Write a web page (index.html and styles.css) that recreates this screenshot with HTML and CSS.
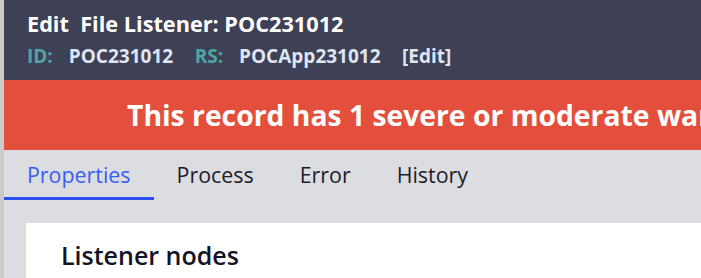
FILE: index.html
```html
<!DOCTYPE html>
<html>
<head>
<meta charset="utf-8">
<link rel="stylesheet" href="styles.css">
</head>
<body>
<div class="page">
  <div class="rail"></div>
  <div class="main">
    <header class="header">
      <h1 class="title">Edit&nbsp; File Listener: POC231012</h1>
      <div class="meta">
        <span class="key">ID:</span><span class="val">POC231012</span>
        <span class="key">RS:</span><span class="val">POCApp231012</span>
        <span class="edit">[Edit]</span>
      </div>
    </header>
    <div class="banner">This record has 1 severe or moderate warnings</div>
    <nav class="tabs">
      <span class="tab active">Properties</span>
      <span class="tab">Process</span>
      <span class="tab">Error</span>
      <span class="tab">History</span>
    </nav>
    <section class="content">
      <div class="card">
        <h2 class="card-title">Listener nodes</h2>
      </div>
    </section>
  </div>
</div>
</body>
</html>
```
FILE: styles.css
```css
* { box-sizing: border-box; margin: 0; padding: 0; }
html, body { width: 701px; height: 278px; overflow: hidden; }
body { font-family: "Open Sans", "Noto Sans", sans-serif; background: #dcdde1; }
.page { display: flex; height: 278px; }
.rail { width: 4px; background: #cacaca; flex: none; }
.main { flex: 1; display: flex; flex-direction: column; min-width: 0; }
.header { background: #3e4055; height: 80px; padding: 11px 0 0 23px; }
.title { color: #ffffff; font-size: 21.7px; font-weight: 700; line-height: 26px; white-space: nowrap; }
.meta { margin-top: 8px; font-size: 19px; font-weight: 700; line-height: 22px; display: flex; white-space: nowrap; }
.key { color: #4ea6a3; margin-right: 16px; }
.val { color: #dfe5f3; margin-right: 21.5px; }
.edit { color: #dfe5f3; }
.banner { background: #e44e3c; height: 70px; color: #ffffff; font-size: 28.3px; font-weight: 700; line-height: 70px; white-space: nowrap; overflow: hidden; padding-left: 123px; }
.tabs { display: flex; height: 51px; padding-top: 11px; }
.tab { font-size: 21.4px; line-height: 28px; color: #1c1c2b; padding: 0 23px; height: 39px; white-space: nowrap; }
.tab.active { color: #3a5df2; border-bottom: 3px solid #2a4ef2; }
.content { flex: 1; padding: 22px 0 0 22px; }
.card { background: #ffffff; height: 100%; padding: 17px 0 0 35px; }
.card-title { font-size: 25px; font-weight: 600; color: #141428; line-height: 30px; white-space: nowrap; }
```
